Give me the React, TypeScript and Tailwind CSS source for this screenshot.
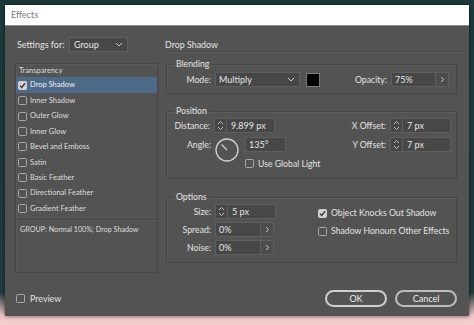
import React from "react";

const font = { fontFamily: 'Lato, "Noto Sans", "Liberation Sans", sans-serif' };

function Check({ checked = false }: { checked?: boolean }) {
  return (
    <span
      className={
        "flex h-[9px] w-[9px] shrink-0 items-center justify-center rounded-[1.5px] border " +
        (checked ? "border-[#cfcfcf] bg-[#d0d0d0]" : "border-[#a8a8a8] bg-transparent")
      }
    >
      {checked ? (
        <svg width="7" height="7" viewBox="0 0 7 7">
          <path d="M1 3.7 L2.8 5.4 L6 1.3" fill="none" stroke="#3a3a3a" strokeWidth="1.4" />
        </svg>
      ) : null}
    </span>
  );
}

function Spinner() {
  return (
    <span className="flex h-full w-[12px] shrink-0 items-center justify-center border-r border-[#5e5e5e]">
      <svg width="7" height="11" viewBox="0 0 7 11">
        <path d="M1 4 L3.5 1.5 L6 4" fill="none" stroke="#bdbdbd" strokeWidth="1" />
        <path d="M1 7 L3.5 9.5 L6 7" fill="none" stroke="#bdbdbd" strokeWidth="1" />
      </svg>
    </span>
  );
}

function SpinField({ value }: { value: string }) {
  return (
    <div className="flex h-[15px] w-[61px] shrink-0 items-center border border-[#5e5e5e] bg-[#474747]">
      <Spinner />
      <span className="whitespace-nowrap pl-[4px] text-[9px] text-[#e6e6e6]">{value}</span>
    </div>
  );
}

function ArrowField({ value, w }: { value: string; w: string }) {
  return (
    <div className={"flex h-[15px] shrink-0 items-center border border-[#5e5e5e] bg-[#474747] " + w}>
      <span className="flex-1 whitespace-nowrap pl-[3px] text-[9px] text-[#e6e6e6]">{value}</span>
      <span className="flex h-full w-[13px] items-center justify-center border-l border-[#5e5e5e] bg-[#4d4d4d]">
        <svg width="5" height="7" viewBox="0 0 5 7">
          <path d="M1.2 1 L3.6 3.5 L1.2 6" fill="none" stroke="#c8c8c8" strokeWidth="1" />
        </svg>
      </span>
    </div>
  );
}

function Caret() {
  return (
    <svg width="8" height="5" viewBox="0 0 8 5">
      <path d="M1 1 L4 4 L7 1" fill="none" stroke="#c8c8c8" strokeWidth="1" />
    </svg>
  );
}

function Label({ text, w }: { text: string; w: string }) {
  return (
    <span className={"shrink-0 whitespace-nowrap pr-[4px] text-right text-[8.7px] text-[#e2e2e2] " + w}>{text}</span>
  );
}

function Group({ title, className, children }: { title: string; className: string; children: React.ReactNode }) {
  return (
    <fieldset className={"border border-[#464646] shadow-[inset_1px_1px_0_#5b5b5b] " + className}>
      <legend className="ml-[6px] whitespace-nowrap px-[3px] text-[8.7px] leading-[12px] text-[#e2e2e2]">{title}</legend>
      {children}
    </fieldset>
  );
}

const effects = [
  "Inner Shadow",
  "Outer Glow",
  "Inner Glow",
  "Bevel and Emboss",
  "Satin",
  "Basic Feather",
  "Directional Feather",
  "Gradient Feather",
];

export default function App() {
  return (
    <div
      className="h-[325px] w-[474px] overflow-hidden bg-[linear-gradient(180deg,#1c3a3b_0%,#213b3c_90%,#efc4c6_97%,#f4d0d1_100%)] pl-[5px] pt-[5px]"
      style={font}
    >
      <div className="w-[464px] shadow-[0_0_4px_rgba(0,0,0,0.6)]">
        <div className="flex h-[21px] items-center border-b border-[#8a8a8a] bg-white pl-[6px] text-[9px] text-[#7c7c7c]">
          Effects
        </div>
        <div className="flex h-[290px] flex-col bg-[#535353] text-[#e2e2e2]">
          <div className="flex">
            {/* left column */}
            <div className="ml-[10px] flex w-[143px] shrink-0 flex-col">
              <div className="mt-[11px] flex h-[15px] items-center">
                <span className="ml-[2px] w-[52px] shrink-0 whitespace-nowrap text-[9px]">Settings for:</span>
                <div className="flex h-[15px] w-[59px] items-center justify-between border border-[#5f5f5f] bg-[#474747] pl-[4px] pr-[4px]">
                  <span className="text-[9px] text-[#e6e6e6]">Group</span>
                  <Caret />
                </div>
              </div>
              <div className="mt-[11px] flex h-[210px] flex-col border border-[#464646] shadow-[inset_1px_1px_0_#5a5a5a]">
                <div className="flex h-[13px] items-center pl-[3px] text-[7.5px] text-[#dcdcdc]">Transparency</div>
                <div className="flex h-[16px] items-center gap-[3px] bg-[#4d6a88] pl-[2px]">
                  <Check checked />
                  <span className="whitespace-nowrap text-[7.5px] text-[#f0f0f0]">Drop Shadow</span>
                </div>
                {effects.map((e) => (
                  <div key={e} className="flex h-[15.4px] items-center gap-[3px] pl-[2px]">
                    <Check />
                    <span className="whitespace-nowrap text-[7.5px] text-[#dedede]">{e}</span>
                  </div>
                ))}
                <div className="mt-[3px] flex-1 whitespace-nowrap border-t border-[#464646] px-[4px] pt-[5px] text-[7.2px] text-[#dcdcdc] shadow-[inset_0_1px_0_#5a5a5a]">
                  GROUP: Normal 100%; Drop Shadow
                </div>
              </div>
            </div>

            {/* right column */}
            <div className="ml-[7px] flex flex-1 flex-col">
              <div className="mt-[13px] flex h-[12px] items-center whitespace-nowrap text-[8.9px] text-[#e4e4e4]">Drop Shadow</div>
              <div className="mr-[4px] h-px bg-[#4a4a4a] shadow-[0_1px_0_#5c5c5c]" />

              <Group title="Blending" className="ml-[1px] mt-[6px] h-[36px] w-[291px]">
                <div className="mt-[2px] flex items-center">
                  <Label text="Mode:" w="w-[48px]" />
                  <div className="flex h-[15px] w-[85px] shrink-0 items-center justify-between border border-[#5f5f5f] bg-[#474747] pl-[3px] pr-[4px]">
                    <span className="text-[9px] text-[#e6e6e6]">Multiply</span>
                    <Caret />
                  </div>
                  <span className="ml-[6px] h-[14px] w-[14px] shrink-0 border border-[#7a7a7a] bg-black" />
                  <Label text="Opacity:" w="w-[71px]" />
                  <ArrowField value="75%" w="w-[58px]" />
                </div>
              </Group>

              <Group title="Position" className="ml-[1px] mt-[11px] h-[74px] w-[291px]">
                <div className="mt-[1px] flex">
                  <div className="flex w-[119px] shrink-0 flex-col">
                    <div className="flex items-center">
                      <Label text="Distance:" w="w-[47px]" />
                      <SpinField value="9.899 px" />
                    </div>
                    <div className="mt-[4px] flex items-start">
                      <div className="flex h-[15px] items-center">
                        <Label text="Angle:" w="w-[48px]" />
                      </div>
                      <svg width="24" height="24" viewBox="0 0 24 24" className="mt-[1px] shrink-0">
                        <circle cx="12" cy="12" r="11" fill="none" stroke="#d0d0d0" strokeWidth="1.3" />
                        <path d="M12 12 L6.5 6.5" stroke="#d0d0d0" strokeWidth="1.3" />
                      </svg>
                      <div className="ml-[6px] flex flex-col">
                        <div className="flex h-[15px] w-[41px] items-center border border-[#5e5e5e] bg-[#474747] pl-[3px] text-[9px] text-[#e6e6e6]">
                          135°
                        </div>
                        <div className="mt-[5px] flex items-center gap-[4px]">
                          <Check />
                          <span className="whitespace-nowrap text-[8.7px]">Use Global Light</span>
                        </div>
                      </div>
                    </div>
                  </div>
                  <div className="flex flex-col gap-[4px]">
                    <div className="flex items-center">
                      <Label text="X Offset:" w="w-[104px]" />
                      <SpinField value="7 px" />
                    </div>
                    <div className="flex items-center">
                      <Label text="Y Offset:" w="w-[104px]" />
                      <SpinField value="7 px" />
                    </div>
                  </div>
                </div>
              </Group>

              <Group title="Options" className="ml-[1px] mt-[12px] h-[72px] w-[291px]">
                <div className="mt-[1px] flex">
                  <div className="flex flex-col gap-[3px]">
                    <div className="flex items-center">
                      <Label text="Size:" w="w-[48px]" />
                      <SpinField value="5 px" />
                    </div>
                    <div className="flex items-center">
                      <Label text="Spread:" w="w-[48px]" />
                      <ArrowField value="0%" w="w-[59px]" />
                    </div>
                    <div className="flex items-center">
                      <Label text="Noise:" w="w-[48px]" />
                      <ArrowField value="0%" w="w-[59px]" />
                    </div>
                  </div>
                  <div className="ml-[42px] mt-[3px] flex flex-col gap-[6px]">
                    <div className="flex h-[12px] items-center gap-[4px]">
                      <Check checked />
                      <span className="whitespace-nowrap text-[8.7px]">Object Knocks Out Shadow</span>
                    </div>
                    <div className="flex h-[12px] items-center gap-[4px]">
                      <Check />
                      <span className="whitespace-nowrap text-[8.7px]">Shadow Honours Other Effects</span>
                    </div>
                  </div>
                </div>
              </Group>
            </div>
          </div>

          <div className="mt-[17px] flex items-center">
            <div className="ml-[11px] flex items-center gap-[5px]">
              <Check />
              <span className="text-[8.9px]">Preview</span>
            </div>
            <div className="ml-auto mr-[12px] flex gap-[8px]">
              <button className="h-[17px] w-[62px] rounded-full border-2 border-[#cfcfcf] text-[9px] text-[#ececec]">OK</button>
              <button className="h-[17px] w-[62px] rounded-full border-2 border-[#bcbcbc] text-[9px] text-[#ececec]">Cancel</button>
            </div>
          </div>
        </div>
      </div>
    </div>
  );
}
